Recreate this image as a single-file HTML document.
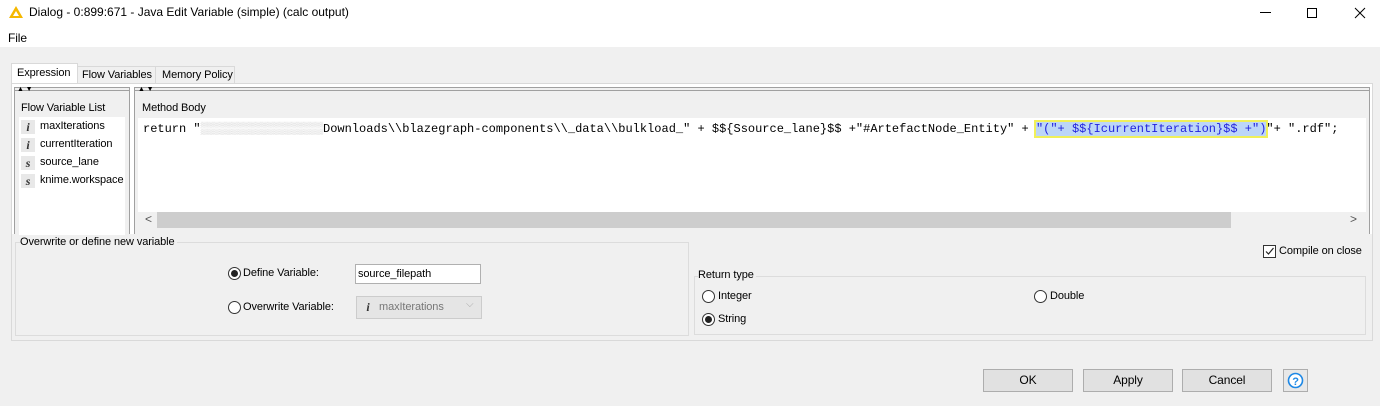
<!DOCTYPE html>
<html><head><style>
*{box-sizing:border-box;margin:0;padding:0}
body{width:1380px;height:406px;background:#f0f0f0;font-family:"Liberation Sans",sans-serif;font-size:11px;letter-spacing:-0.1px;color:#000;position:relative;overflow:hidden}
.a{position:absolute}
.mono{font-family:"Liberation Mono",monospace;font-size:12px;white-space:pre;letter-spacing:0}
.radio{position:absolute;width:13px;height:13px;border:1px solid #333;border-radius:50%;background:#fff}
.radio.on::after{content:"";position:absolute;left:2px;top:2px;width:7px;height:7px;border-radius:50%;background:#222}
.btn{position:absolute;height:23px;border:1px solid #adadad;background:#e1e1e1;text-align:center;line-height:21px;font-size:12px}
.ic{position:absolute;width:14px;height:14px;background:#e8e8e8;font-family:"Liberation Serif",serif;font-weight:bold;font-style:italic;font-size:12px;text-align:center;line-height:14px;color:#333}
</style></head><body>
<div class="a" style="left:0;top:0;width:1380px;height:47px;background:#fff"></div>
<svg class="a" style="left:8px;top:5px" width="16" height="14"><polygon points="8,1 15,13 1,13" fill="#f5b800"/><polygon points="8,6 11,11 5,11" fill="#fff"/></svg>
<div class="a" style="left:29px;top:5px;font-size:12px;letter-spacing:0">Dialog - 0:899:671 - Java Edit Variable (simple) (calc output)</div>
<div class="a" style="left:1260px;top:12px;width:11px;height:1px;background:#000"></div>
<div class="a" style="left:1307px;top:8px;width:10px;height:10px;border:1px solid #000"></div>
<svg class="a" style="left:1354px;top:7px" width="12" height="12"><path d="M1 1L11 11M11 1L1 11" stroke="#000" stroke-width="1"/></svg>
<div class="a" style="left:8px;top:31px;font-size:12px">File</div>
<div class="a" style="left:11px;top:63px;width:67px;height:21px;background:#fff;border:1px solid #d9d9d9;border-bottom:none"></div>
<div class="a" style="left:17px;top:67px">Expression</div>
<div class="a" style="left:78px;top:66px;width:78px;height:18px;border:1px solid #d9d9d9;border-left:none;background:#f0f0f0"></div>
<div class="a" style="left:82px;top:69px">Flow Variables</div>
<div class="a" style="left:156px;top:66px;width:79px;height:18px;border:1px solid #d9d9d9;border-left:none;background:#f0f0f0"></div>
<div class="a" style="left:162px;top:69px">Memory Policy</div>
<div class="a" style="left:11px;top:83px;width:1362px;height:258px;border:1px solid #d9d9d9;background:#f0f0f0"></div>
<div class="a" style="left:12px;top:84px;width:1360px;height:150px;background:#fff"></div>
<div class="a" style="left:14px;top:87px;width:116px;height:147px;border:1px solid #a0a0a0;border-bottom:none;background:#f0f0f0"></div>
<div class="a" style="left:15px;top:88px;width:114px;height:3px;border-bottom:1px solid #a0a0a0"></div>
<div class="a" style="left:17px;top:86px;font-size:7px">▲ ▼</div>
<div class="a" style="left:21px;top:102px">Flow Variable List</div>
<div class="a" style="left:19px;top:117px;width:106px;height:118px;background:#fff"></div>
<div class="ic" style="left:21px;top:120px">i</div><div class="a" style="left:40px;top:120px">maxIterations</div>
<div class="ic" style="left:21px;top:138px">i</div><div class="a" style="left:40px;top:138px">currentIteration</div>
<div class="ic" style="left:21px;top:156px">s</div><div class="a" style="left:40px;top:156px">source_lane</div>
<div class="ic" style="left:21px;top:174px">s</div><div class="a" style="left:40px;top:174px">knime.workspace</div>
<div class="a" style="left:134px;top:87px;width:1236px;height:147px;border:1px solid #a0a0a0;border-bottom:none;background:#f0f0f0"></div>
<div class="a" style="left:135px;top:88px;width:1234px;height:3px;border-bottom:1px solid #a0a0a0"></div>
<div class="a" style="left:138px;top:86px;font-size:7px">▲ ▼</div>
<div class="a" style="left:142px;top:102px">Method Body</div>
<div class="a" style="left:138px;top:118px;width:1228px;height:94px;background:#fff"></div>
<div class="a mono" style="left:143px;top:122px">return "<span style="color:#ccc">▒▒▒▒▒▒▒▒▒▒▒▒▒▒▒▒▒</span>Downloads\\blazegraph-components\\_data\\bulkload_" + $${Ssource_lane}$$ +"#ArtefactNode_Entity" + <span style="background:#bcd6f8;outline:2px solid #f0f05a;color:#22d">"("+ $${IcurrentIteration}$$ +")</span>"+ ".rdf";</div>
<div class="a" style="left:138px;top:212px;width:1228px;height:16px;background:#f0f0f0"></div>
<div class="a" style="left:157px;top:212px;width:1074px;height:16px;background:#cdcdcd"></div>
<div class="a" style="left:145px;top:212px;font-size:12px;color:#555">&lt;</div>
<div class="a" style="left:1350px;top:212px;font-size:12px;color:#555">&gt;</div>
<div class="a" style="left:15px;top:242px;width:674px;height:94px;border:1px solid #dcdcdc"></div>
<div class="a" style="left:20px;top:236px;background:#f0f0f0;padding-right:2px">Overwrite or define new variable</div>
<div class="radio on" style="left:228px;top:267px"></div>
<div class="a" style="left:243px;top:267px">Define Variable:</div>
<div class="a" style="left:355px;top:264px;width:126px;height:20px;border:1px solid #b0b0b0;background:#fff;padding:3px 2px">source_filepath</div>
<div class="radio" style="left:228px;top:301px"></div>
<div class="a" style="left:243px;top:301px">Overwrite Variable:</div>
<div class="a" style="left:356px;top:296px;width:126px;height:23px;border:1px solid #ccc;background:#e5e5e5"></div>
<div class="ic" style="left:361px;top:300px;background:#e5e5e5">i</div>
<div class="a" style="left:379px;top:301px;color:#777">maxIterations</div>
<div class="a" style="left:466px;top:299px;color:#aaa;font-size:10px">⌵</div>
<div class="a" style="left:1263px;top:245px;width:13px;height:13px;border:1px solid #333;background:#fff"></div>
<svg class="a" style="left:1264px;top:246px" width="11" height="11"><path d="M2 5.5L4.5 8L9.5 2" stroke="#222" fill="none" stroke-width="1.2"/></svg>
<div class="a" style="left:1279px;top:245px">Compile on close</div>
<div class="a" style="left:694px;top:276px;width:672px;height:59px;border:1px solid #dcdcdc"></div>
<div class="a" style="left:698px;top:269px;background:#f0f0f0;padding-right:2px">Return type</div>
<div class="radio" style="left:702px;top:290px"></div><div class="a" style="left:718px;top:290px">Integer</div>
<div class="radio" style="left:1034px;top:290px"></div><div class="a" style="left:1050px;top:290px">Double</div>
<div class="radio on" style="left:702px;top:313px"></div><div class="a" style="left:718px;top:313px">String</div>
<div class="btn" style="left:983px;top:369px;width:90px">OK</div>
<div class="btn" style="left:1083px;top:369px;width:90px">Apply</div>
<div class="btn" style="left:1182px;top:369px;width:90px">Cancel</div>
<div class="btn" style="left:1283px;top:369px;width:25px;background:#e8e8e8"></div>
<svg class="a" style="left:1287px;top:372px" width="17" height="17"><circle cx="8.5" cy="8.5" r="7" fill="#fff" stroke="#1e88e5" stroke-width="1.6"/><text x="8.5" y="13" font-family="Liberation Sans" font-size="11" font-weight="bold" fill="#1e88e5" text-anchor="middle">?</text></svg>
</body></html>
